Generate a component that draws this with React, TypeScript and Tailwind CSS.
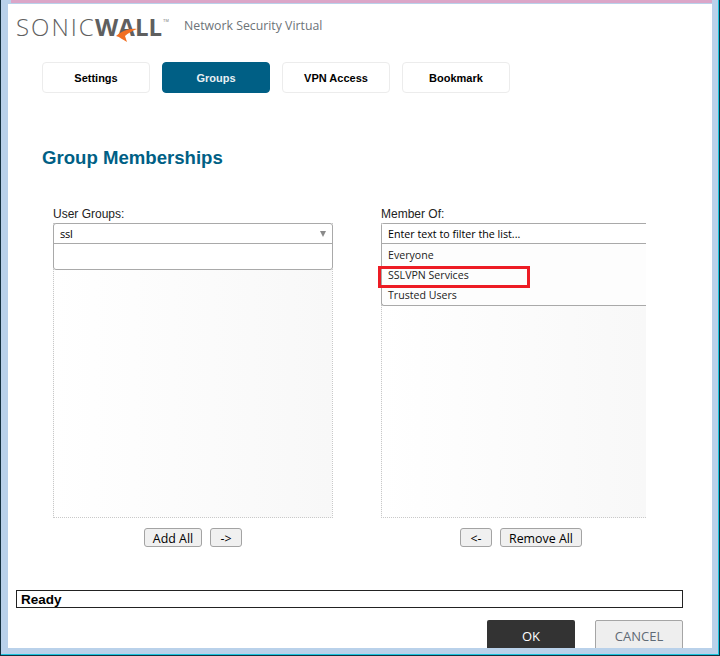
import React from 'react'

const font = "font-['Liberation_Sans',Arial,sans-serif]"
const ui = "font-['Open_Sans','Noto_Sans',sans-serif]"

function Tab({ label, active }: { label: string; active?: boolean }) {
  return (
    <div
      className={`h-[31px] w-[108px] rounded-[4px] border flex items-center justify-center pt-[1px] text-[11px] font-bold ${font} ${
        active ? 'bg-[#005f85] border-[#005f85] text-[#e8f0f4]' : 'bg-white border-[#ececec] text-black'
      }`}
    >
      {label}
    </div>
  )
}

function SmallButton({ label, width }: { label: string; width: string }) {
  return (
    <button className={`h-[19px] ${width} rounded-[3px] border border-[#a3a3a3] bg-[#f0f0f0] pt-[2px] text-[12.4px] leading-[16px] text-black ${ui}`}>
      {label}
    </button>
  )
}

function ListRow({ label }: { label: string }) {
  return <div className={`h-[20px] pt-[1px] flex items-center pl-[6px] text-[10.6px] text-[#222] ${ui}`}>{label}</div>
}

function Logo() {
  return (
    <div className="flex items-start">
      <div className="relative h-[32px] w-[168px] shrink-0">
        <span className={`absolute left-0 top-[-1px] text-[24px] leading-[32px] font-light tracking-[2px] text-[#5f5f5f] ${ui}`}>SONIC</span>
        <span className={`absolute left-[79px] top-[-1px] text-[24px] leading-[32px] font-bold tracking-[0.1px] text-[#5f5f5f] ${ui}`}>WALL</span>
        <svg className="absolute left-[100px] top-[16px]" width="22" height="15" viewBox="0 0 22 15">
          <path d="M0 8 C6 3 13 0 21 1 C16 3 12 5 9 8 L11 14 C7 12 4 9 0 8Z" fill="#f26f21" />
        </svg>
        <span className="absolute left-[147px] top-[6px] text-[4px] leading-[5px] text-[#777]">TM</span>
      </div>
      <span className={`text-[12.3px] leading-[17px] mt-[5px] text-[#6d7378] ${ui}`}>Network Security Virtual</span>
    </div>
  )
}

export default function App() {
  return (
    <div className={`w-[720px] h-[656px] overflow-hidden bg-[#b9d1ea] border-l border-r border-b border-[#14303f] ${font}`}>
      <div className="h-full border-r border-b border-[#19c3dd]">
        <div className="ml-[10px] w-[701px] h-[3px] bg-[#dba6c8]" />
        <div className="h-[1px]" />
        <div className="ml-[7px] w-[704px] h-[644px] bg-white overflow-hidden flex flex-col">
          <div className="pl-[8px] pt-[8px] h-[58px] shrink-0">
            <Logo />
          </div>

          <div className="pl-[34px] flex gap-[12px] shrink-0">
            <Tab label="Settings" />
            <Tab label="Groups" active />
            <Tab label="VPN Access" />
            <Tab label="Bookmark" />
          </div>

          <h1 className="pl-[34px] mt-[53px] shrink-0 text-[18.6px] leading-[24px] font-bold text-[#005f85]">Group Memberships</h1>

          <div className="mt-[37px] pl-[45px] flex gap-[48px] shrink-0">
            <div className="w-[280px]">
              <div className="text-[12px] leading-[14px] text-[#222]">User Groups:</div>
              <div className="mt-[2px] h-[295px] border border-dotted border-[#c9c9c9] bg-gradient-to-r from-white to-[#f8f8f8]">
                <div className="-m-[1px] h-[47px] rounded-[3px] border border-[#a9a9a9] bg-white">
                  <div className="h-[20px] pt-[1px] border-b border-[#a9a9a9] flex items-center justify-between px-[6px]">
                    <span className={`text-[11px] tracking-[-0.3px] text-black ${ui}`}>ssl</span>
                    <span className="w-0 h-0 border-l-[3px] border-r-[3px] border-t-[6px] border-l-transparent border-r-transparent border-t-[#8a8a8a]" />
                  </div>
                </div>
              </div>
              <div className="mt-[10px] flex justify-center gap-[8px]">
                <SmallButton label="Add All" width="w-[58px]" />
                <SmallButton label="->" width="w-[32px]" />
              </div>
            </div>

            <div className="w-[280px]">
              <div className="text-[12px] leading-[14px] text-[#222]">Member Of:</div>
              <div className="mt-[2px] mr-[15px] h-[295px] border-l border-b border-t border-dotted border-[#c9c9c9] bg-gradient-to-r from-white to-[#f8f8f8]">
                <div className="-ml-[1px] -mt-[1px] h-[83px] rounded-l-[3px] border-l border-t border-b border-[#a9a9a9] bg-[#fdfdfd] relative">
                  <div className={`h-[20px] pt-[1px] bg-white border-b border-[#a9a9a9] flex items-center pl-[6px] text-[10.7px] text-black ${ui}`}>
                    Enter text to filter the list...
                  </div>
                  <div className="pt-[1px]">
                    <ListRow label="Everyone" />
                    <ListRow label="SSLVPN Services" />
                    <ListRow label="Trusted Users" />
                  </div>
                  <div className="absolute left-[-4px] top-[42px] h-[22px] w-[152px] border-[3px] border-[#ed1c24]" />
                </div>
              </div>
              <div className="mt-[10px] flex justify-center gap-[8px]">
                <SmallButton label="<-" width="w-[32px]" />
                <SmallButton label="Remove All" width="w-[82px]" />
              </div>
            </div>
          </div>

          <div className="mt-[43px] ml-[8px] mr-[29px] h-[18px] pt-[2px] shrink-0 border border-[#222] flex items-center pl-[4px] text-[13.5px] font-bold text-black">
            Ready
          </div>

          <div className="mt-[12px] ml-[479px] flex gap-[20px] shrink-0">
            <div className={`h-[33px] w-[88px] rounded-[2px] bg-[#333333] text-white text-[13px] flex items-center justify-center ${ui}`}>OK</div>
            <div className={`h-[33px] w-[88px] rounded-[2px] border border-[#a5a5a5] bg-[#eeeeee] text-[#5f6a75] text-[13px] flex items-center justify-center ${ui}`}>CANCEL</div>
          </div>
        </div>
      </div>
    </div>
  )
}
